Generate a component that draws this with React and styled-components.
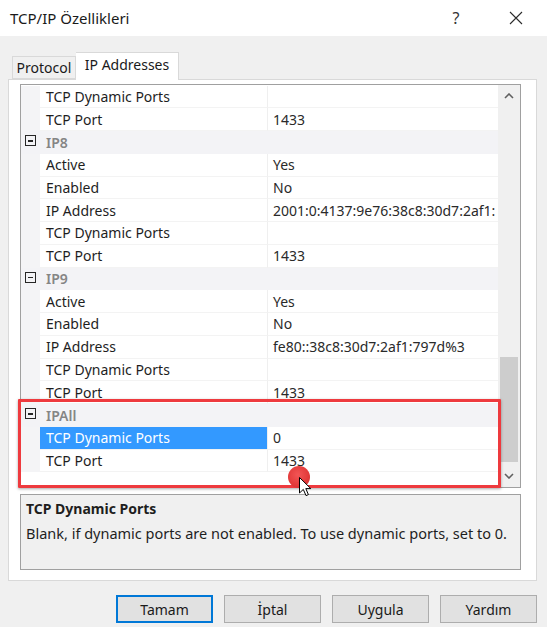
import React from 'react';
import styled, { createGlobalStyle } from 'styled-components';

const Global = createGlobalStyle`
  html, body { margin: 0; padding: 0; background: #f0f0f0; }
  body { font-family: "Noto Sans", "Open Sans", sans-serif; }
  #root { width: 547px; height: 627px; }
`;

const Window = styled.div`
  position: relative;
  width: 547px;
  height: 627px;
  background: #f0f0f0;
  display: flex;
  flex-direction: column;
  overflow: hidden;
  color: #1e1e1e;
`;

const TitleBar = styled.div`
  height: 36px;
  flex: none;
  background: #ffffff;
  display: flex;
  align-items: center;
`;

const Title = styled.div`
  flex: 1;
  padding-left: 10px;
  font-size: 15px;
  color: #1a1a1a;
`;

const TitleButton = styled.div`
  width: ${p => p.$w}px;
  height: 36px;
  display: flex;
  align-items: center;
  justify-content: center;
  font-size: 16px;
  color: #333;
`;

const TabStrip = styled.div`
  margin-top: 15px;
  height: 28px;
  padding-left: 12px;
  display: flex;
  align-items: flex-end;
  position: relative;
  z-index: 2;
`;

const Tab = styled.div`
  box-sizing: border-box;
  height: ${p => (p.$active ? 28 : 23)}px;
  width: ${p => p.$w}px;
  margin-bottom: ${p => (p.$active ? -1 : 0)}px;
  background: ${p => (p.$active ? '#ffffff' : '#f0f0f0')};
  border: 1px solid #d9d9d9;
  border-bottom: ${p => (p.$active ? 'none' : '1px solid #d9d9d9')};
  border-left: ${p => (p.$active ? 'none' : '1px solid #d9d9d9')};
  display: flex;
  align-items: center;
  justify-content: center;
  padding-bottom: ${p => (p.$active ? 4 : 0)}px;
  font-size: 14px;
  color: #1a1a1a;
`;

const Panel = styled.div`
  box-sizing: border-box;
  margin: 0 10px 0 8px;
  height: 502px;
  border: 1px solid #d9d9d9;
  background: #ffffff;
  padding: 4px 15px 10px 11px;
  display: flex;
  flex-direction: column;
  gap: 6px;
`;

const Grid = styled.div`
  box-sizing: border-box;
  height: 405px;
  border: 1px solid #a0a0a0;
  display: flex;
  background: #ffffff;
`;

const Rows = styled.div`
  flex: 1;
  overflow: hidden;
  padding-top: 0.6px;
`;

const Row = styled.div`
  box-sizing: border-box;
  height: 22.75px;
  display: grid;
  grid-template-columns: 19px 228px 1fr;
  align-items: stretch;
  font-size: 14px;
  background: ${p => (p.$cat ? '#f3f3f6' : '#ffffff')};
`;

const Gutter = styled.div`
  background: #f4f4f6;
`;

const CatGutter = styled.div`
  display: flex;
  align-items: center;
  padding-left: 4px;
`;

const Expander = styled.div`
  box-sizing: border-box;
  width: 11px;
  height: 11px;
  border: 1.5px solid #262626;
  display: flex;
  align-items: center;
  justify-content: center;
  margin-top: -3px;
  &::after {
    content: '';
    width: 5px;
    height: 1.5px;
    background: #262626;
  }
`;

const CatName = styled.div`
  grid-column: 2 / 4;
  display: flex;
  align-items: center;
  padding-left: 6px;
  color: #858585;
  font-weight: 600;
`;

const Label = styled.div`
  display: flex;
  align-items: center;
  padding-left: 6px;
  border-right: 1px solid #efefef;
  border-bottom: 1px solid #f3f3f3;
  background: ${p => (p.$sel ? '#3399ff' : 'transparent')};
  color: ${p => (p.$sel ? '#ffffff' : '#1e1e1e')};
  white-space: nowrap;
  overflow: hidden;
`;

const Value = styled.div`
  display: flex;
  align-items: center;
  padding-left: 5px;
  border-bottom: 1px solid #f3f3f3;
  white-space: nowrap;
  overflow: hidden;
  color: #2a2a2a;
`;

const ScrollBar = styled.div`
  width: 22px;
  flex: none;
  background: #f0f0f0;
  display: flex;
  flex-direction: column;
  align-items: center;
`;

const ArrowBtn = styled.div`
  height: 22px;
  width: 100%;
  display: flex;
  align-items: center;
  justify-content: center;
`;

const Track = styled.div`
  flex: 1;
`;

const Thumb = styled.div`
  width: 18px;
  height: 105px;
  background: #cdcdcd;
  margin-bottom: 3px;
`;

const Desc = styled.div`
  box-sizing: border-box;
  height: 76px;
  border: 1px solid #a0a0a0;
  background: #f0f0f0;
  padding: 2px 5px;
  font-size: 14.5px;
  color: #1e1e1e;
  line-height: 24px;
`;

const DescTitle = styled.div`
  font-weight: 700;
  font-size: 14px;
`;

const ButtonRow = styled.div`
  margin-top: 14px;
  padding-right: 10px;
  display: flex;
  justify-content: flex-end;
  gap: 11px;
`;

const Button = styled.div`
  box-sizing: border-box;
  width: 97px;
  height: 28px;
  background: #e1e1e1;
  border: ${p => (p.$def ? '2px solid #0078d7' : '1px solid #adadad')};
  display: flex;
  align-items: center;
  justify-content: center;
  font-size: 14px;
  color: #1a1a1a;
`;

const Highlight = styled.div`
  position: absolute;
  left: 18px;
  top: 399px;
  width: 483px;
  height: 89px;
  box-sizing: border-box;
  border: 3px solid #ee3a3e;
  border-radius: 1px;
  box-shadow: 0 1px 3px rgba(0, 0, 0, 0.35);
  pointer-events: none;
`;

const ClickDot = styled.div`
  position: absolute;
  left: 288px;
  top: 466px;
  width: 22px;
  height: 22px;
  border-radius: 50%;
  background: radial-gradient(circle at 45% 40%, #f25555 0%, #e23a3a 60%, #c42a2a 100%);
`;

const Cursor = styled.svg`
  position: absolute;
  left: 299px;
  top: 477px;
`;

const Chevron = ({ up }) => (
  <svg width="10" height="6" viewBox="0 0 10 6">
    <path
      d={up ? 'M1 5 L5 1 L9 5' : 'M1 1 L5 5 L9 1'}
      fill="none"
      stroke="#606060"
      strokeWidth="1.6"
    />
  </svg>
);

const rows = [
  { l: 'TCP Dynamic Ports', v: '' },
  { l: 'TCP Port', v: '1433' },
  { cat: 'IP8' },
  { l: 'Active', v: 'Yes' },
  { l: 'Enabled', v: 'No' },
  { l: 'IP Address', v: '2001:0:4137:9e76:38c8:30d7:2af1:' },
  { l: 'TCP Dynamic Ports', v: '' },
  { l: 'TCP Port', v: '1433' },
  { cat: 'IP9' },
  { l: 'Active', v: 'Yes' },
  { l: 'Enabled', v: 'No' },
  { l: 'IP Address', v: 'fe80::38c8:30d7:2af1:797d%3' },
  { l: 'TCP Dynamic Ports', v: '' },
  { l: 'TCP Port', v: '1433' },
  { cat: 'IPAll' },
  { l: 'TCP Dynamic Ports', v: '0', sel: true },
  { l: 'TCP Port', v: '1433' },
];

export default function App() {
  return (
    <>
      <Global />
      <Window>
        <TitleBar>
          <Title>TCP/IP Özellikleri</Title>
          <TitleButton $w={56}>?</TitleButton>
          <TitleButton $w={63}>
            <svg width="14" height="14" viewBox="0 0 14 14">
              <path d="M1 1 L13 13 M13 1 L1 13" stroke="#2b2b2b" strokeWidth="1.1" />
            </svg>
          </TitleButton>
        </TitleBar>
        <TabStrip>
          <Tab $w={64}>Protocol</Tab>
          <Tab $w={103} $active>IP Addresses</Tab>
        </TabStrip>
        <Panel>
          <Grid>
            <Rows>
              {rows.map((r, i) =>
                r.cat ? (
                  <Row key={i} $cat>
                    <CatGutter>
                      <Expander />
                    </CatGutter>
                    <CatName>{r.cat}</CatName>
                  </Row>
                ) : (
                  <Row key={i}>
                    <Gutter />
                    <Label $sel={r.sel}>{r.l}</Label>
                    <Value>{r.v}</Value>
                  </Row>
                )
              )}
            </Rows>
            <ScrollBar>
              <ArrowBtn>
                <Chevron up />
              </ArrowBtn>
              <Track />
              <Thumb />
              <ArrowBtn>
                <Chevron />
              </ArrowBtn>
            </ScrollBar>
          </Grid>
          <Desc>
            <DescTitle>TCP Dynamic Ports</DescTitle>
            <div>Blank, if dynamic ports are not enabled. To use dynamic ports, set to 0.</div>
          </Desc>
        </Panel>
        <ButtonRow>
          <Button $def>Tamam</Button>
          <Button>İptal</Button>
          <Button>Uygula</Button>
          <Button>Yardım</Button>
        </ButtonRow>
        <Highlight />
        <ClickDot />
        <Cursor width="13" height="20" viewBox="0 0 13 20">
          <path
            d="M0.5 0.5 L0.5 16 L4.3 12.4 L7 18.6 L9.4 17.6 L6.8 11.6 L11.8 11.6 Z"
            fill="#ffffff"
            stroke="#000000"
            strokeWidth="1"
            strokeLinejoin="round"
          />
        </Cursor>
      </Window>
    </>
  );
}
